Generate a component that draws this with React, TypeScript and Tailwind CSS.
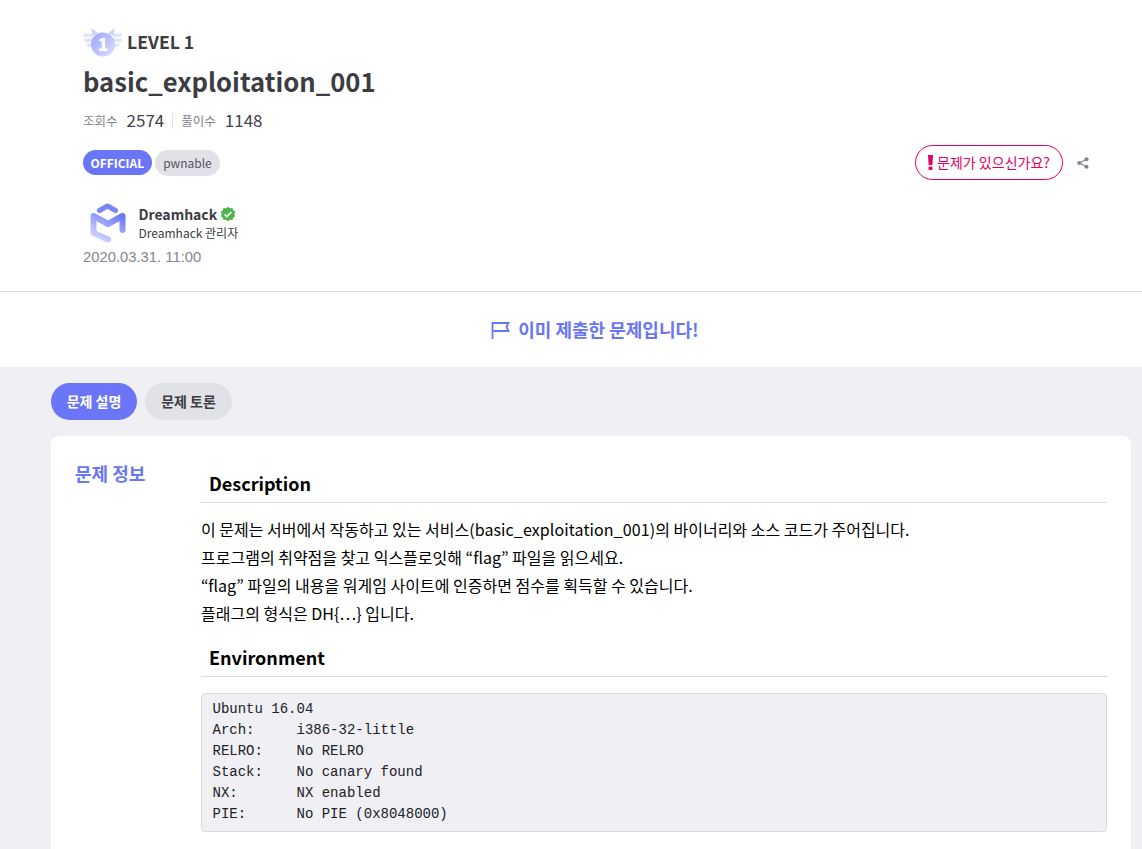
const CJK = "font-['Noto_Sans_CJK_KR',sans-serif]";

function LevelBadge() {
  return (
    <svg width="40" height="30" viewBox="0 0 40 30" className="shrink-0">
      <defs>
        <linearGradient id="lv" x1="0" y1="0" x2="1" y2="1">
          <stop offset="0" stopColor="#98a3fb" />
          <stop offset="1" stopColor="#dfe2fe" />
        </linearGradient>
      </defs>
      <g fill="#e1e3fc">
        <path d="M0 6.500h10v3.500H1zM1 11.500h9V15H2zM3 16.500h7V20H5zM39 6.500H30v3.500h8zM39 11.500h-9V15h8zM37 16.500h-7V20h5z" />
      </g>
      <path d="M8 1l7 5-5 3zM32 1l-7 5 5 3z" fill="#cdd2fa" />
      <circle cx="20" cy="17.500" r="12" fill="url(#lv)" />
      <text x="20" y="23.500" textAnchor="middle" fontSize="17" fontWeight="900" fill="#fff" fontFamily="Noto Sans CJK KR">1</text>
    </svg>
  );
}

function DreamhackLogo() {
  return (
    <svg width="48" height="48" viewBox="0 0 48 48" className="shrink-0">
      <defs>
        <linearGradient id="dh" gradientUnits="userSpaceOnUse" x1="30" y1="12" x2="14" y2="42">
          <stop offset="0" stopColor="#6d78f5" />
          <stop offset="1" stopColor="#d9ddfe" />
        </linearGradient>
      </defs>
      <path d="M15.500 10.500l8-4.500 8 4.500" fill="none" stroke="#7b86f6" strokeWidth="5" strokeLinejoin="round" strokeLinecap="round" />
      <path d="M24 39.500l-14.500-6.500V16l14.500 8 14.500-8v14" fill="none" stroke="url(#dh)" strokeWidth="6" strokeLinejoin="round" strokeLinecap="round" />
    </svg>
  );
}

function Verified() {
  return (
    <svg width="16" height="16" viewBox="0 0 24 24">
      <path d="M12 1l3 2.200 3.700-.2 1.100 3.500 3 2.200L21.600 12l1.200 3.300-3 2.200-1.100 3.500-3.700-.2L12 23l-3-2.200-3.700.2-1.100-3.500-3-2.200L2.400 12 1.200 8.700l3-2.200L5.300 3 9 3.200z" fill="#4db84a" />
      <path d="M7 12.500l3.400 3.400L17 9" fill="none" stroke="#fff" strokeWidth="2.500" />
    </svg>
  );
}

function Stat({ label, value }: { label: string; value: string }) {
  return (
    <span className="flex items-center gap-[9px]">
      <span className="text-[12.500px] text-[#85858f]">{label}</span>
      <span className="-mt-[2px] text-[17px] text-[#44444c]">{value}</span>
    </span>
  );
}

export default function App() {
  return (
    <div className={`h-[849px] overflow-hidden bg-white text-[#3c3c42] ${CJK}`}>
      <header className="h-[292px] border-b border-[#dcdce0] pl-[83px] pr-[53px] pt-[26px]">
        <div className="flex h-[32px] items-center gap-[4px]">
          <LevelBadge />
          <span className="text-[17.600px] font-bold leading-none">LEVEL 1</span>
        </div>
        <h1 className="mt-[3px] text-[25.600px] font-bold leading-[40px]">basic_exploitation_001</h1>
        <div className="mt-[8px] flex h-[24px] items-center">
          <Stat label="조회수" value="2574" />
          <span className="mx-[8px] h-[16px] w-px bg-[#e2e2e6]" />
          <Stat label="풀이수" value="1148" />
        </div>
        <div className="mt-[12px] flex h-[35px] items-center justify-between">
          <div className="flex items-center gap-[3px]">
            <span className="flex h-[25px] items-center rounded-full bg-[#6a76f7] px-[7.500px] text-[12px] font-bold text-white">OFFICIAL</span>
            <span className="flex h-[26px] items-center rounded-full bg-[#e1e1e8] px-[8.500px] text-[12px] text-[#55555c]">pwnable</span>
          </div>
          <div className="flex items-center gap-[14px]">
            <button className="flex h-[35px] w-[148px] items-center justify-center gap-[4px] rounded-full border border-[#e6005f] text-[14px] text-[#e6005f]">
              <svg width="5" height="15" viewBox="0 0 5 15" fill="#e6005f">
                <path d="M0 0h5l-.6 10H.6z" />
                <rect x=".5" y="11.500" width="4" height="3.500" rx="1" />
              </svg>
              문제가 있으신가요?
            </button>
            <svg width="12" height="12" viewBox="0 0 24 24" fill="#85858f">
              <circle cx="19" cy="4.500" r="4" />
              <circle cx="19" cy="19.500" r="4" />
              <circle cx="4.500" cy="12" r="4" />
              <path d="M5 11l14-8 1 2-14 8zM5 13l14 8 1-2-14-8z" />
            </svg>
          </div>
        </div>
        <div className="mt-[20px] flex h-[48px] items-center gap-[6.500px] pl-[1px]">
          <DreamhackLogo />
          <div className="flex flex-col">
            <span className="flex items-center gap-[3px] text-[14px] font-bold leading-[18px]">
              Dreamhack <Verified />
            </span>
            <span className="text-[12px] leading-[20px]">Dreamhack 관리자</span>
          </div>
        </div>
        <div className="-mt-px font-['Liberation_Sans',sans-serif] text-[14.800px] leading-[20px] text-[#85858f]">2020.03.31. 11:00</div>
      </header>

      <div className="flex h-[75px] items-center justify-center gap-[8px] pl-[48px] text-[18px] font-bold text-[#6a76f7]">
        <svg width="19" height="18" viewBox="0 0 19 18" fill="none" stroke="#6a76f7" strokeWidth="1.800">
          <path d="M1.500 18V2h16l-2 4 2 4h-16" />
        </svg>
        이미 제출한 문제입니다!
      </div>

      <main className="h-full bg-[#efeff4] pl-[51px] pr-[11px] pt-[16px]">
        <div className="flex gap-[8px]">
          <button className="h-[37px] w-[86px] rounded-full bg-[#6a76f7] text-[14px] font-bold text-white">문제 설명</button>
          <button className="h-[37px] w-[87px] rounded-full bg-[#e1e1e8] text-[14px] font-bold text-[#3c3c42]">문제 토론</button>
        </div>
        <section className="mt-[16px] flex h-[500px] rounded-[8px] bg-white px-[24px] pt-[24px]">
          <h2 className="w-[126px] shrink-0 text-[18px] font-bold leading-[26px] text-[#6a76f7]">문제 정보</h2>
          <article className="min-w-0 flex-1 text-[16px] text-black">
            <h3 className="mt-[8px] border-b border-[#dcdce0] pb-[4px] pl-[8px] text-[18px] font-bold leading-[30px]">Description</h3>
            <div className="mt-[12px] leading-[28px]">
              <p>이 문제는 서버에서 작동하고 있는 서비스<span className="tracking-[0.1px]">(basic_exploitation_001)</span>의 바이너리와 소스 코드가 주어집니다.</p>
              <p>프로그램의 취약점을 찾고 익스플로잇해 “flag” 파일을 읽으세요.</p>
              <p>“flag” 파일의 내용을 워게임 사이트에 인증하면 점수를 획득할 수 있습니다.</p>
              <p>플래그의 형식은 DH{"{…}"} 입니다.</p>
            </div>
            <h3 className="mt-[15px] border-b border-[#dcdce0] pb-[4px] pl-[8px] text-[18px] font-bold leading-[30px]">Environment</h3>
            <pre className="mt-[16px] rounded-[4px] border border-[#dcdce0] bg-[#efeff4] px-[10.500px] pb-[6px] pt-[5px] font-['Liberation_Mono',monospace] text-[14px] leading-[21px] text-[#212126]">{`Ubuntu 16.04
Arch:     i386-32-little
RELRO:    No RELRO
Stack:    No canary found
NX:       NX enabled
PIE:      No PIE (0x8048000)`}</pre>
          </article>
        </section>
      </main>
    </div>
  );
}
